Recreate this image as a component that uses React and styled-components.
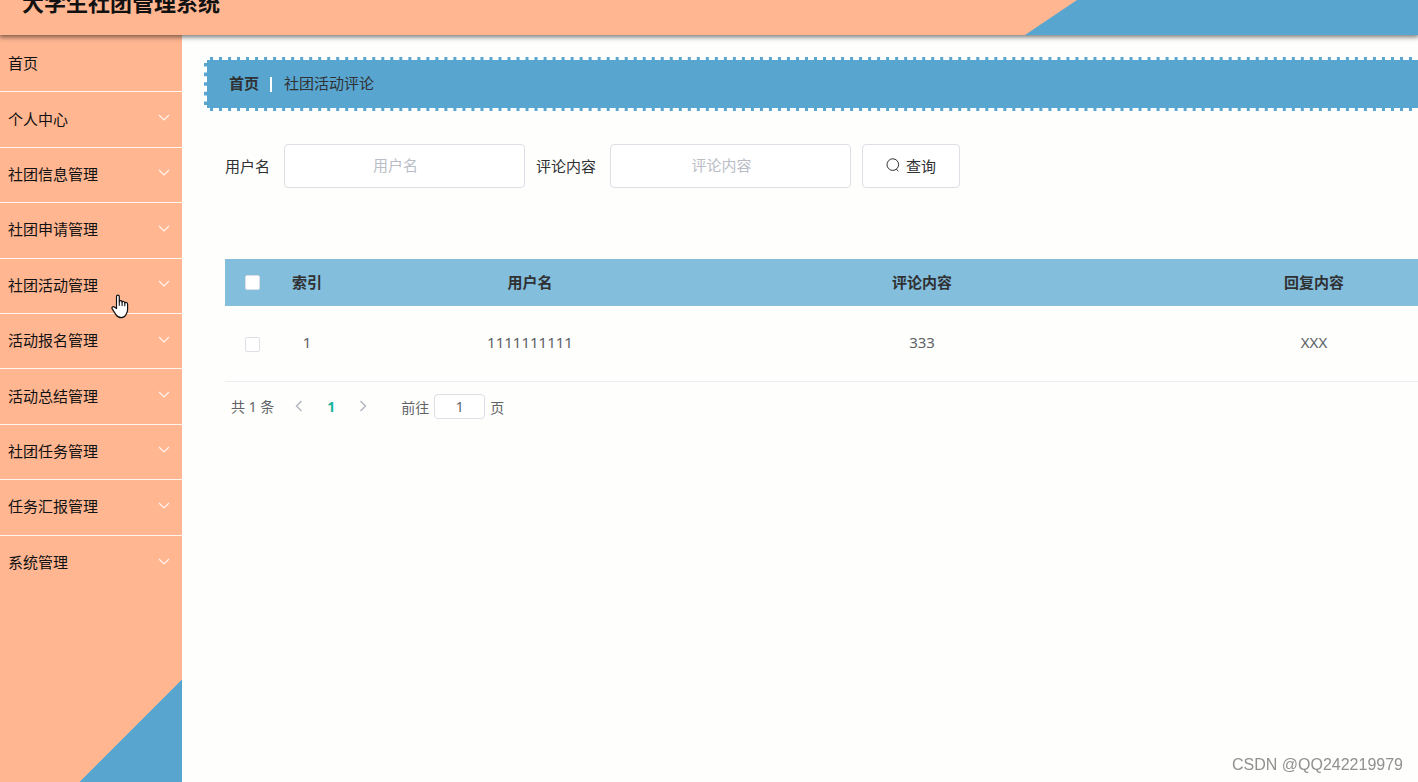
import React from "react";
import styled, { createGlobalStyle } from "styled-components";

const menu = [
  "首页",
  "个人中心",
  "社团信息管理",
  "社团申请管理",
  "社团活动管理",
  "活动报名管理",
  "活动总结管理",
  "社团任务管理",
  "任务汇报管理",
  "系统管理",
];

const comments = [{ id: 1, user: "1111111111", content: "333", reply: "XXX" }];

function Chevron({ direction = "down", size = 12, width = 1.2 }) {
  const paths = {
    down: "M1 3 L6 8 L11 3",
    left: "M8.5 1 L3.5 6 L8.5 11",
    right: "M3.5 1 L8.5 6 L3.5 11",
  };
  return (
    <svg width={size} height={size} viewBox="0 0 12 12" fill="none" stroke="currentColor" strokeWidth={width} aria-hidden="true">
      <path d={paths[direction]} />
    </svg>
  );
}

function SearchIcon() {
  return (
    <svg width="15" height="15" viewBox="0 0 15 15" fill="none" stroke="currentColor" aria-hidden="true">
      <circle cx="6.8" cy="6.6" r="5.8" />
      <path d="M10.3 11.2 L12.4 13.1" />
    </svg>
  );
}

function HandPointer() {
  return (
    <Pointer width="18" height="25" viewBox="0 0 18 25" aria-hidden="true">
      <path
        d="M5.5 14.5 V2.6 C5.5 .6 8.3 .6 8.3 2.6 V7.6 C8.6 6.2 11 6.4 11.1 8.1 C11.6 7 13.7 7.3 13.8 8.9 C14.4 8 16.6 8.4 16.6 10.2 V15.5 C16.6 18 15.6 19.3 15 20.6 C14 22.9 12.4 23.7 10.4 23.7 C7.6 23.7 6.2 22.6 4.9 20.6 L1.2 14.9 C.3 13.3 2 12 3.4 13 Z"
        fill="#fff"
        stroke="#111"
        strokeWidth="1.2"
        strokeLinejoin="round"
      />
      <path d="M8.3 7.5 V11.8 M11.1 8 V12 M13.8 8.8 V12.2" stroke="#111" strokeWidth="1.1" fill="none" />
    </Pointer>
  );
}

function App() {
  return (
    <>
      <GlobalStyle />
      <Header>
        <Title>大学生社团管理系统</Title>
        <HeaderCorner />
      </Header>
      <Layout>
        <Sidebar>
          <Menu>
            {menu.map((name, i) => (
              <MenuItem key={name}>
                <MenuLink href="#">
                  {name}
                  {i > 0 && <Chevron />}
                </MenuLink>
                {name === "社团活动管理" && <HandPointer />}
              </MenuItem>
            ))}
          </Menu>
        </Sidebar>
        <Main>
          <Breadcrumb aria-label="breadcrumb">
            <HomeLink href="#">首页</HomeLink>
            <Separator />
            <span>社团活动评论</span>
          </Breadcrumb>
          <Content>
            <SearchForm onSubmit={(e) => e.preventDefault()}>
              <Label htmlFor="user">用户名</Label>
              <TextInput id="user" placeholder="用户名" />
              <Label htmlFor="content">评论内容</Label>
              <TextInput id="content" placeholder="评论内容" />
              <SearchButton type="submit">
                <SearchIcon />
                查询
              </SearchButton>
            </SearchForm>
            <Table>
              <colgroup>
                <Col $width="55px" />
                <Col $width="54px" />
                <Col />
                <Col />
                <Col />
              </colgroup>
              <thead>
                <tr>
                  <Th>
                    <Checkbox type="checkbox" aria-label="全选" />
                  </Th>
                  <Th>索引</Th>
                  <Th>用户名</Th>
                  <Th>评论内容</Th>
                  <Th>回复内容</Th>
                </tr>
              </thead>
              <tbody>
                {comments.map((c) => (
                  <tr key={c.id}>
                    <Td>
                      <Checkbox type="checkbox" aria-label="选择" />
                    </Td>
                    <Td>{c.id}</Td>
                    <Td>{c.user}</Td>
                    <Td>{c.content}</Td>
                    <Td>{c.reply}</Td>
                  </tr>
                ))}
              </tbody>
            </Table>
            <Pagination>
              <Total>共 1 条</Total>
              <PageButton aria-label="上一页" disabled>
                <Chevron direction="left" width={1.5} />
              </PageButton>
              <PageButton $active>1</PageButton>
              <PageButton aria-label="下一页" disabled>
                <Chevron direction="right" width={1.5} />
              </PageButton>
              <Jump>
                前往
                <PageInput defaultValue="1" />
                页
              </Jump>
            </Pagination>
          </Content>
        </Main>
      </Layout>
      <Watermark>CSDN @QQ242219979</Watermark>
    </>
  );
}

const GlobalStyle = createGlobalStyle`
  * {
    box-sizing: border-box;
  }

  body {
    margin: 0;
    overflow: hidden;
    background: #fefefd;
    color: #303133;
    font-family: "Noto Sans", "Noto Sans CJK SC", sans-serif;
    font-size: 15px;
  }

  button, input {
    font-family: inherit;
    font-size: inherit;
  }
`;

const Header = styled.header`
  position: relative;
  z-index: 1;
  display: flex;
  justify-content: space-between;
  height: 35px;
  padding-left: 22px;
  background: #ffb691;
  box-shadow: 0 1px 5px 1px rgba(0, 0, 0, 0.55);
`;

const Title = styled.h1`
  margin: 0;
  color: #111;
  font-size: 22px;
  font-weight: 700;
  line-height: 4px;
`;

const HeaderCorner = styled.div`
  width: 393px;
  background: #58a6d0;
  clip-path: polygon(52px 0, 100% 0, 100% 100%, 0 100%);
`;

const Layout = styled.div`
  display: flex;
  min-height: calc(100vh - 35px);
`;

const Sidebar = styled.aside`
  flex: 0 0 182px;
  padding-top: 2px;
  background: linear-gradient(135deg, #ffb691 50%, #58a6d0 50%) no-repeat right bottom / 103px 103px #ffb691;
`;

const Menu = styled.ul`
  display: grid;
  grid-template-rows: repeat(10, 1fr);
  height: 554px;
  margin: 0;
  padding: 0;
  list-style: none;
`;

const MenuItem = styled.li`
  position: relative;
  border-bottom: 1px solid #fff4ee;

  &:last-child {
    border-bottom: none;
  }
`;

const MenuLink = styled.a`
  display: flex;
  align-items: center;
  justify-content: space-between;
  height: 100%;
  padding: 0 12px 3px 8px;
  color: #111;
  text-decoration: none;

  svg {
    color: #fff4ee;
  }
`;

const Pointer = styled.svg`
  position: absolute;
  top: 35px;
  left: 111px;
`;

const Main = styled.main`
  flex: 1;
  min-width: 0;
  padding: 22px 0 0 22px;
  overflow: hidden;
`;

const Breadcrumb = styled.nav`
  display: flex;
  align-items: center;
  height: 54px;
  padding: 0 0 3px 22px;
  border: 3px dashed #fff;
  border-right: none;
  background: #58a6d0;
`;

const HomeLink = styled.a`
  color: #303133;
  font-weight: 700;
  text-decoration: none;
`;

const Separator = styled.span`
  width: 2px;
  height: 15px;
  margin: 3px 12px 0 11px;
  background: #fff;
`;

const Content = styled.section`
  padding: 33px 0 0 21px;
`;

const SearchForm = styled.form`
  display: flex;
  align-items: center;
  margin-bottom: 71px;
`;

const Label = styled.label`
  margin-right: 14px;
  padding-bottom: 1px;
`;

const TextInput = styled.input`
  width: 241px;
  height: 44px;
  margin-right: 11px;
  padding: 0 30px 2px 12px;
  border: 1px solid #dcdfe6;
  border-radius: 4px;
  background: #fff;
  text-align: center;

  &::placeholder {
    color: #b9bdc6;
  }
`;

const SearchButton = styled.button`
  display: flex;
  align-items: center;
  justify-content: center;
  gap: 5px;
  width: 98px;
  height: 44px;
  padding: 0 0 2px;
  border: 1px solid #dcdfe6;
  border-radius: 4px;
  background: #fff;
  color: #303133;
`;

const Table = styled.table`
  width: 100%;
  min-width: 1285px;
  border-collapse: collapse;
  table-layout: fixed;
`;

const Col = styled.col`
  width: ${(props) => props.$width || "auto"};
`;

const Th = styled.th`
  height: 47px;
  padding: 0 0 3px;
  background: #83bedc;
  font-weight: 700;
  text-align: center;
`;

const Td = styled.td`
  height: 75px;
  padding: 0 0 2px;
  border-bottom: 1px solid #ebeef5;
  color: #606266;
  text-align: center;
`;

const Checkbox = styled.input`
  width: 15px;
  height: 15px;
  margin: 0;
  border: 1px solid #dcdfe6;
  border-radius: 2px;
  background: #fff;
  appearance: none;
  vertical-align: middle;
`;

const Pagination = styled.div`
  display: flex;
  align-items: center;
  padding: 11px 6px;
  color: #606266;
  font-size: 14px;
`;

const Total = styled.span`
  margin-right: 9px;
  padding-bottom: 2px;
`;

const PageButton = styled.button`
  display: flex;
  align-items: center;
  justify-content: center;
  width: 32px;
  height: 28px;
  padding: 0 0 1px;
  border: none;
  background: none;
  color: ${(props) => (props.$active ? "#17b39a" : "#b4b8bf")};
  font-weight: 700;
`;

const Jump = styled.label`
  display: flex;
  align-items: center;
  gap: 5px;
  margin-left: 22px;
`;

const PageInput = styled.input`
  width: 51px;
  height: 25px;
  padding: 0;
  border: 1px solid #dcdfe6;
  border-radius: 4px;
  background: #fff;
  color: #606266;
  text-align: center;
`;

const Watermark = styled.div`
  position: fixed;
  right: 15px;
  bottom: 8px;
  color: #909090;
  font-family: "Liberation Sans", sans-serif;
  font-size: 16px;
`;

export default App;
